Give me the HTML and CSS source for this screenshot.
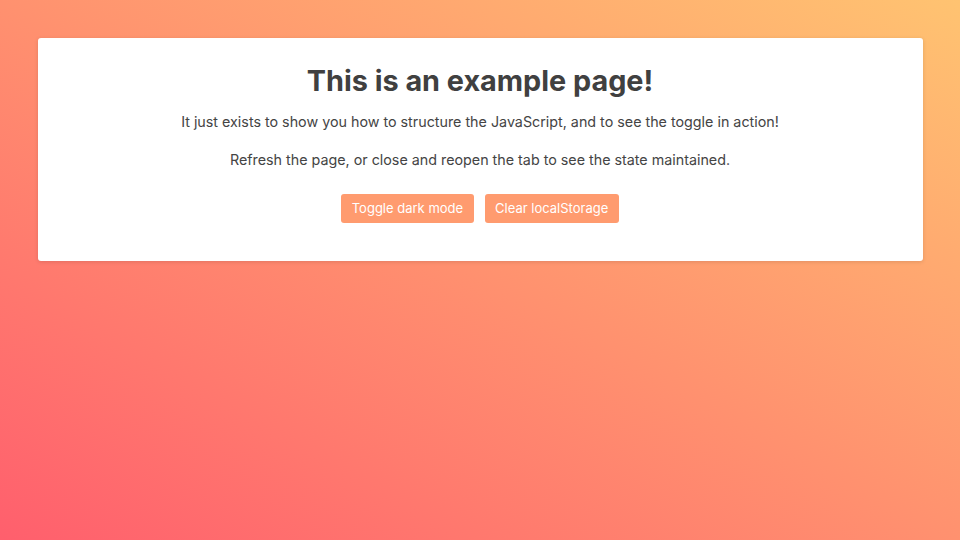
FILE: index.html
```html
<!DOCTYPE html>
<html lang="en">
<head>
<meta charset="utf-8">
<title>Example page</title>
<link rel="stylesheet" href="styles.css">
</head>
<body>
<main class="page">
  <section class="card">
    <h1 class="title">This is an example page!</h1>
    <p class="text">It just exists to show you how to structure the JavaScript, and to see the toggle in action!</p>
    <p class="text">Refresh the page, or close and reopen the tab to see the state maintained.</p>
    <div class="actions">
      <button class="btn" type="button">Toggle dark mode</button>
      <button class="btn" type="button">Clear localStorage</button>
    </div>
  </section>
</main>
</body>
</html>
```

FILE: styles.css
```css
html, body {
  margin: 0;
  height: 100%;
}
body {
  background: linear-gradient(to top right, #ff5f6d, #ffc371);
  font-family: Inter, "Open Sans", sans-serif;
  color: #444;
}
.page {
  padding: 37.5px;
}
.card {
  background: #fff;
  border-radius: 3px;
  box-shadow: 0 1px 4px rgba(0,0,0,0.12);
  padding: 25px 32px 38px;
  text-align: center;
}
.title {
  margin: 0 0 12px;
  font-size: 28.8px;
  font-weight: 700;
  line-height: 36px;
  color: #404040;
}
.text {
  margin: 0 0 16px;
  font-size: 14.3px;
  line-height: 22px;
  color: #444;
}
.actions {
  display: flex;
  justify-content: center;
  gap: 11px;
  margin-top: 23px;
}
.btn {
  font-family: inherit;
  font-size: 13px;
  color: #fff;
  background: #ff9b6f;
  border: 0;
  border-radius: 3px;
  height: 29px;
  padding: 0 10.5px;
}
```
